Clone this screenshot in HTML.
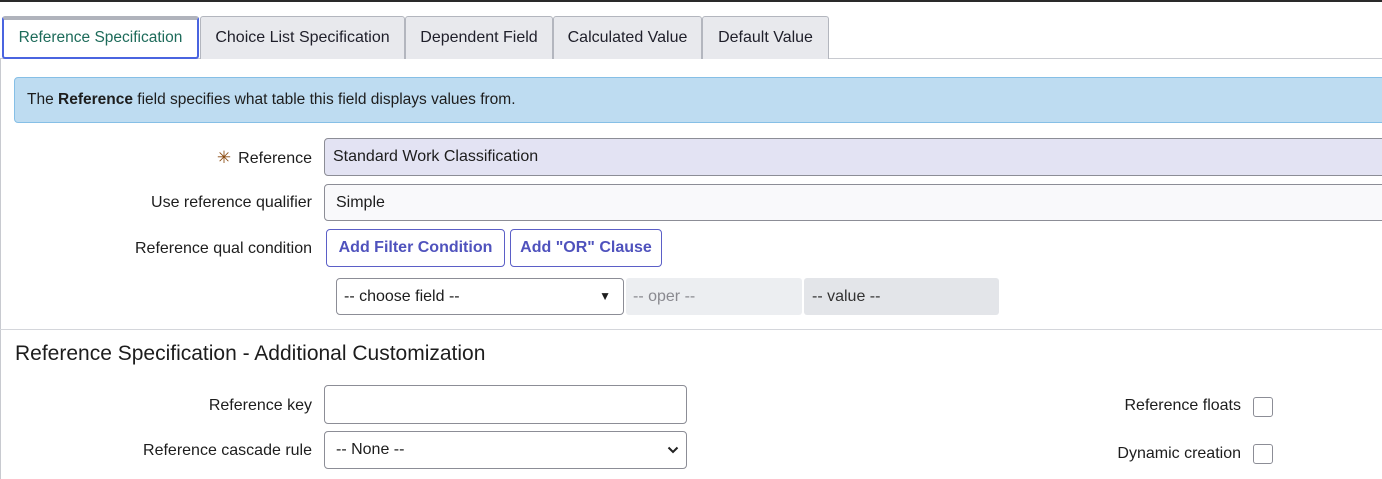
<!DOCTYPE html>
<html><head><style>
*{box-sizing:border-box;margin:0;padding:0}
body{width:1382px;height:479px;overflow:hidden;background:#fff;font-family:"Liberation Sans",sans-serif;font-size:16px;color:#1d1d1d;position:relative}
.a{position:absolute}
.tab{position:absolute;top:16px;height:43px;background:#e8e9ed;border:1px solid #b3b6be;border-bottom:none;border-radius:3px 3px 0 0;line-height:42px;text-align:center;font-size:16px;color:#1f1f2a}
.lbl{position:absolute;right:1070px;text-align:right;font-size:16px;white-space:nowrap}
.inp{position:absolute;border:1px solid #8c8d96;border-radius:4px;padding-left:8px;font-size:16px}
.btn{position:absolute;top:229px;height:38px;border:1px solid #5b5fc7;border-radius:4px;color:#4f52bd;font-weight:bold;text-align:center;line-height:36px;font-size:16px;background:#fff}
.cb{position:absolute;left:1253px;width:20px;height:20px;border:1px solid #8c8d96;border-radius:3px;background:#fff}
</style></head><body>
<div class="a" style="left:0;top:0;width:1382px;height:2px;background:#2a2a2a"></div>
<div class="a" style="left:0;top:58px;width:1382px;height:1px;background:#c8cad0"></div>
<div class="a" style="left:0;top:58px;width:1px;height:421px;background:#c8cad0"></div>
<div class="tab" style="left:200px;width:205px">Choice List Specification</div>
<div class="tab" style="left:405px;width:148px">Dependent Field</div>
<div class="tab" style="left:553px;width:149px">Calculated Value</div>
<div class="tab" style="left:702px;width:127px">Default Value</div>
<div class="tab" style="left:2px;width:197px;top:16px;height:43px;background:#fff;border:2px solid #4a64e0;border-top:4px solid #b0b3bc;line-height:36px;color:#1d6b5a;border-radius:3px;font-size:15.5px">Reference Specification</div>
<div class="a" style="left:14px;top:77px;width:1380px;height:46px;background:#bedcf1;border:1px solid #86bfe6;border-radius:4px;line-height:44px;padding-left:12px;font-size:15.5px">The <b>Reference</b> field specifies what table this field displays values from.</div>
<div class="lbl" style="top:148px"><span style="color:#8a4a10;font-size:17px;margin-right:7px">✳</span>Reference</div>
<div class="inp" style="left:324px;top:138px;width:1070px;height:38px;background:#e3e3f3;line-height:36px">Standard Work Classification</div>
<div class="lbl" style="top:194px">Use reference qualifier</div>
<div class="inp" style="left:324px;top:184px;width:1070px;height:37px;background:#f9f9fb;line-height:36px;padding-left:11px">Simple</div>
<div class="lbl" style="top:240px">Reference qual condition</div>
<div class="btn" style="left:326px;width:179px">Add Filter Condition</div>
<div class="btn" style="left:510px;width:152px">Add "OR" Clause</div>
<div class="inp" style="left:336px;top:278px;width:288px;height:37px;line-height:35px;padding-left:7px">-- choose field --<span style="position:absolute;right:12px;top:0;font-size:12px">▼</span></div>
<div class="a" style="left:626px;top:278px;width:176px;height:37px;background:#eceef1;border-radius:3px;line-height:37px;padding-left:7px;color:#8a8a90">-- oper --</div>
<div class="a" style="left:804px;top:278px;width:195px;height:37px;background:#e3e5e9;border-radius:3px;line-height:37px;padding-left:8px;color:#333">-- value --</div>
<div class="a" style="left:0;top:329px;width:1382px;height:1px;background:#d4d6db"></div>
<div class="a" style="left:15px;top:342px;font-size:21px;color:#1d1d1d">Reference Specification - Additional Customization</div>
<div class="lbl" style="top:397px">Reference key</div>
<div class="inp" style="left:324px;top:385px;width:363px;height:39px"></div>
<div class="lbl" style="top:442px">Reference cascade rule</div>
<div class="inp" style="left:324px;top:431px;width:363px;height:38px;line-height:36px;padding-left:11px">-- None --<svg style="position:absolute;right:7px;top:14px" width="12" height="8" viewBox="0 0 12 8"><path d="M1.5 1.5L6 6L10.5 1.5" stroke="#222" stroke-width="2" fill="none"/></svg></div>
<div class="a" style="right:141px;top:397px">Reference floats</div>
<div class="cb" style="top:397px"></div>
<div class="a" style="right:141px;top:445px">Dynamic creation</div>
<div class="cb" style="top:444px"></div>
</body></html>
